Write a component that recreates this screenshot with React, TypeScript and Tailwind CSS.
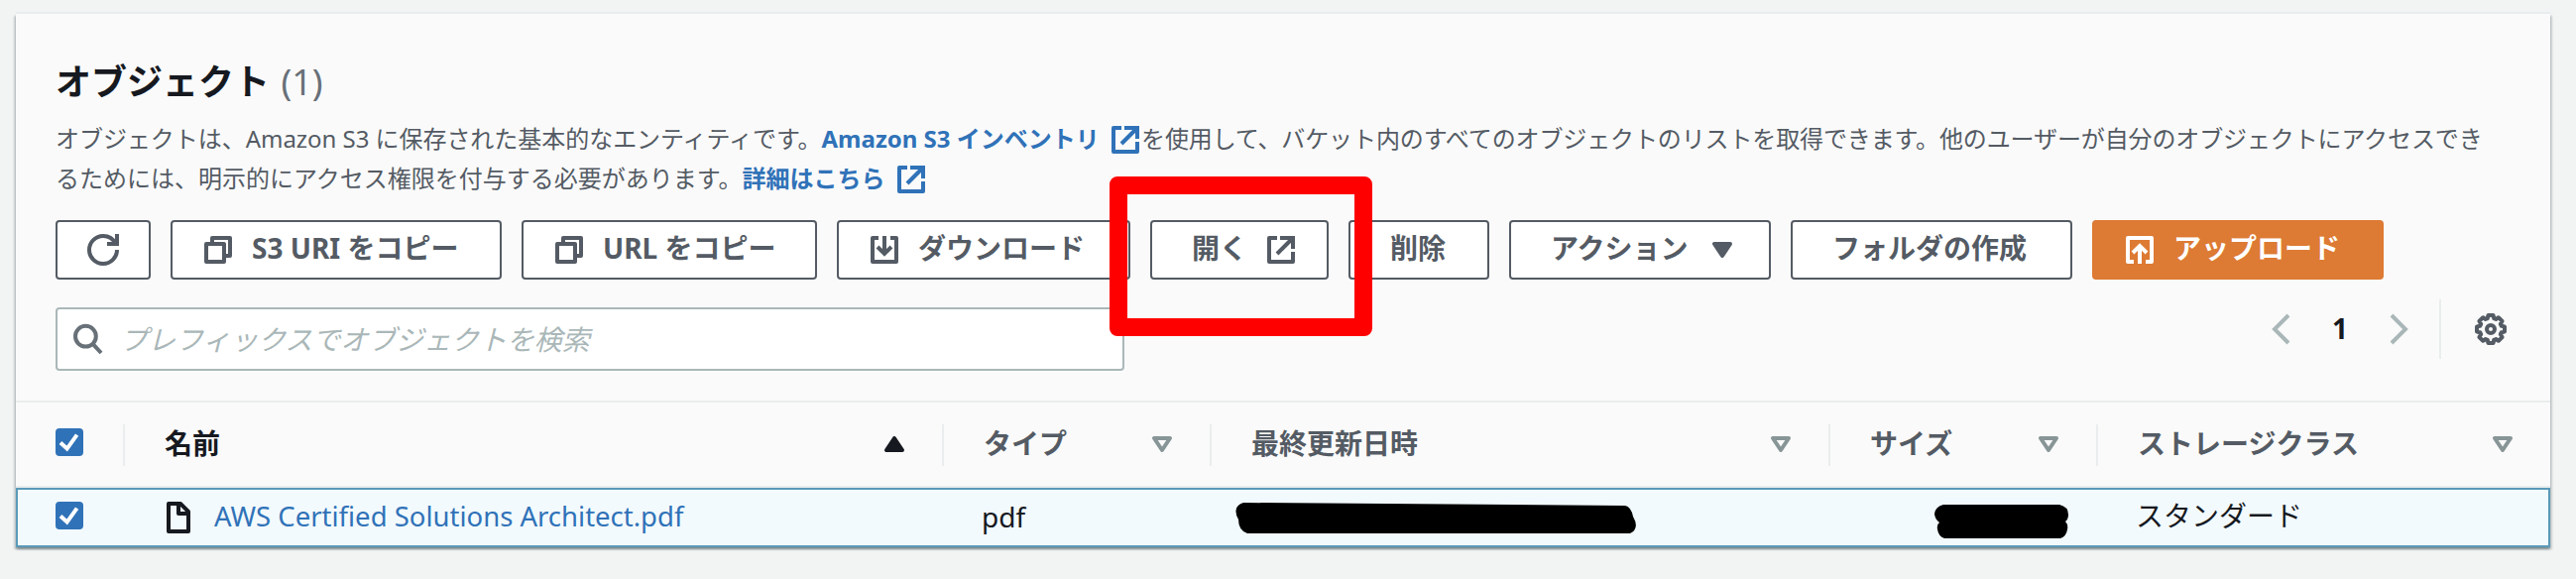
import type { ReactNode } from "react"

const strokeIcon = "shrink-0 w-8 h-8 fill-none stroke-current stroke-2"

function RefreshIcon() {
  return (
    <svg viewBox="0 0 16 16" className={strokeIcon}>
      <path d="M15 8c0 3.87-3.13 7-7 7s-7-3.13-7-7 3.13-7 7-7c2.79 0 5.2 1.63 6.33 4" />
      <path d="M10 5h5V0" />
    </svg>
  )
}

function CopyIcon() {
  return (
    <svg viewBox="0 0 16 16" className={strokeIcon} strokeLinejoin="round">
      <path d="M2 5h9v9H2z" />
      <path d="M5 5V2h9v9h-3" />
    </svg>
  )
}

function DownloadIcon() {
  return (
    <svg viewBox="0 0 16 16" className={strokeIcon} strokeLinejoin="round">
      <path d="M5 2H2v12h12V2h-3" />
      <path d="M8 1v9" />
      <path d="M4.5 6.5 8 10l3.5-3.5" strokeLinejoin="miter" />
    </svg>
  )
}

function UploadIcon() {
  return (
    <svg viewBox="0 0 16 16" className={strokeIcon} strokeLinejoin="round">
      <path d="M5 14H2V2h12v12h-3" />
      <path d="M8 15V6" />
      <path d="M4.5 9.5 8 6l3.5 3.5" strokeLinejoin="miter" />
    </svg>
  )
}

function ExternalIcon({ className = "" }: { className?: string }) {
  return (
    <svg viewBox="0 0 16 16" className={`${strokeIcon} ${className}`} strokeLinejoin="round">
      <path d="M14 9v5H2V2h4" />
      <path d="M7.5 2H14v5.5" strokeLinejoin="miter" />
      <path d="m6 10 8-8" />
    </svg>
  )
}

function SettingsIcon() {
  return (
    <svg viewBox="0 0 16 16" className="w-8 h-8 fill-none stroke-[#545b64] stroke-2" strokeLinejoin="round">
      <path d="M6.7 1h2.6l.3 1.6 1 .4 1.3-.9 1.9 1.9-.9 1.4.5 1 1.6.3v2.6l-1.6.3-.5 1 .9 1.4-1.9 1.9-1.3-.9-1 .4-.3 1.6H6.7l-.3-1.6-1-.4-1.3.9L2.2 12l.9-1.4-.5-1L1 9.3V6.7l1.6-.3.5-1L2.2 4l1.9-1.9 1.3.9 1-.4z" />
      <circle cx="8" cy="8" r="2" />
    </svg>
  )
}

function SortIcon({ sorted = false }: { sorted?: boolean }) {
  if (sorted) {
    return (
      <svg viewBox="0 0 16 16" className="w-8 h-8 fill-[#16191f] stroke-[#16191f] stroke-2" strokeLinejoin="round">
        <path d="M4 11h8L8 5z" />
      </svg>
    )
  }
  return (
    <svg viewBox="0 0 16 16" className="w-8 h-8 fill-none stroke-[#879596] stroke-2" strokeLinejoin="round">
      <path d="M4 5h8l-4 6z" />
    </svg>
  )
}

function Checkbox() {
  return (
    <div className="mb-1 h-7 w-7 rounded bg-[#3072b8]">
      <svg viewBox="0 0 14 14" className="w-7 h-7 fill-none stroke-white stroke-2">
        <path d="m2.5 7.3 3.3 3 5-7" />
      </svg>
    </div>
  )
}

function Button({ className, primary, children }: { className: string; primary?: boolean; children: ReactNode }) {
  const colors = primary
    ? "border-[#dd7a33] bg-[#dd7a33] text-white"
    : "border-[#545b64] bg-white text-[#545b64]"
  return (
    <button
      className={`flex shrink-0 h-[60px] items-center rounded border-2 text-[28px] leading-[56px] font-bold whitespace-nowrap ${colors} ${className}`}
    >
      {children}
    </button>
  )
}

function Label({ children }: { children: ReactNode }) {
  return <span className="pb-[3px] leading-[53px]">{children}</span>
}

function HeaderCell({ className, label, sorted }: { className: string; label: string; sorted?: boolean }) {
  return (
    <div className={`mt-0.5 flex shrink-0 h-[42px] items-center justify-between border-l-2 border-[#eaeded] pb-0.5 pl-10 pr-8 ${className}`}>
      <span className={sorted ? "pb-0.5 text-[#16191f]" : "pb-0.5 text-[#545b64]"}>{label}</span>
      <SortIcon sorted={sorted} />
    </div>
  )
}

export default function App() {
  return (
    <div className="relative w-[2598px] h-[584px] overflow-hidden bg-[#f2f4f4] px-4 pt-3.5 font-['Noto_Sans','Noto_Sans_CJK_JP',sans-serif] text-[#16191f]">
      <div className="w-[2556px] h-[538px] bg-[#fafafa] shadow-[0_-2px_0_#eaeded,0_2px_2px_rgba(0,28,36,0.3),2px_2px_2px_rgba(0,28,36,0.15),-2px_2px_2px_rgba(0,28,36,0.15)]">
        {/* Panel header */}
        <div className="h-[392px] border-b-2 border-[#eaeded] px-10 pt-[45px]">
          <h2 className="h-12 text-4xl leading-[48px] font-bold">
            オブジェクト <span className="ml-0.5 font-normal text-[#687078]">(1)</span>
          </h2>
          <div className="mt-[13px] h-20 text-2xl leading-10 whitespace-nowrap text-[#545b64]">
            <p className="h-10">
              <span className="tracking-[-0.04px]">オブジェクトは、Amazon S3 に保存された基本的なエンティティです。</span>
              <a className="font-bold text-[#3072b8]">
                Amazon S3 インベントリ <ExternalIcon className="ml-1 inline-block align-[-8px]" />
              </a>
              <span className="tracking-[-0.12px]">
                を使用して、バケット内のすべてのオブジェクトのリストを取得できます。他のユーザーが自分のオブジェクトにアクセスでき
              </span>
            </p>
            <p className="h-10">
              るためには、明示的にアクセス権限を付与する必要があります。
              <a className="font-bold text-[#3072b8]">
                詳細はこちら <ExternalIcon className="ml-1 inline-block align-[-8px]" />
              </a>
            </p>
          </div>

          {/* Actions */}
          <div className="mt-[22px] flex gap-5">
            <Button className="w-24 justify-center"><RefreshIcon /></Button>
            <Button className="w-[334px] gap-[18px] pl-[30px]"><CopyIcon /><Label>S3 URI をコピー</Label></Button>
            <Button className="w-[298px] gap-[18px] pl-[30px]"><CopyIcon /><Label>URL をコピー</Label></Button>
            <Button className="w-[296px] gap-[18px] pl-[30px]"><DownloadIcon /><Label>ダウンロード</Label></Button>
            <Button className="w-[180px] gap-[18px] pl-10"><Label>開く</Label><ExternalIcon /></Button>
            <Button className="w-[142px] pl-10"><Label>削除</Label></Button>
            <Button className="w-[264px] gap-[18px] pl-10">
              <Label>アクション</Label>
              <svg viewBox="0 0 16 16" className="w-8 h-8 fill-current stroke-current stroke-2" strokeLinejoin="round">
                <path d="M4 5h8l-4 6z" />
              </svg>
            </Button>
            <Button className="w-[284px] pl-10"><Label>フォルダの作成</Label></Button>
            <Button className="w-[294px] gap-[18px] pl-[30px]" primary><UploadIcon /><Label>アップロード</Label></Button>
          </div>

          {/* Search and pagination */}
          <div className="mt-7 flex justify-between">
            <div className="flex h-16 w-[1078px] items-center rounded border-2 border-[#aab7b8] bg-white pl-4">
              <svg viewBox="0 0 16 16" className="w-8 h-8 fill-none stroke-[#687078] stroke-2">
                <circle cx="6.2" cy="6.6" r="5.2" />
                <path d="m9.8 10.4 4.2 4.6" />
              </svg>
              <span className="ml-[15px] text-[28px] tracking-[-0.05px] text-[#aab7b8] italic">プレフィックスでオブジェクトを検索</span>
            </div>
            <div className="-mt-2 mr-1 flex h-[60px] items-center">
              <svg viewBox="0 0 16 16" className="w-8 h-8 fill-none stroke-[#aab7b8] stroke-2">
                <path d="M12 1 5 8l7 7" />
              </svg>
              <span className="w-[88px] pb-0.5 text-center text-[28px] font-bold">1</span>
              <svg viewBox="0 0 16 16" className="w-8 h-8 fill-none stroke-[#aab7b8] stroke-2">
                <path d="m4 1 7 7-7 7" />
              </svg>
              <div className="mr-[34px] ml-6 h-[60px] w-0.5 bg-[#eaeded]" />
              <SettingsIcon />
            </div>
          </div>
        </div>

        {/* Column headings */}
        <div className="flex h-[86px] items-center border-b-2 border-[#eaeded] text-[28px] font-bold">
          <div className="w-[108px] shrink-0 pl-10"><Checkbox /></div>
          <HeaderCell className="w-[826px]" label="名前" sorted />
          <HeaderCell className="w-[270px]" label="タイプ" />
          <HeaderCell className="w-[624px]" label="最終更新日時" />
          <HeaderCell className="w-[270px]" label="サイズ" />
          <HeaderCell className="w-[458px]" label="ストレージクラス" />
        </div>

        {/* Selected object */}
        <div className="flex h-[60px] items-center border-2 border-[#5a9ab8] bg-[#f2fafd] text-[28px]">
          <div className="w-[146px] shrink-0 pl-[38px]"><Checkbox /></div>
          <div className="flex w-[826px] shrink-0 items-center">
            <svg viewBox="0 0 16 16" className="w-8 h-8 fill-none stroke-[#16191f] stroke-2" strokeLinejoin="round">
              <path d="M3 1h6l4 4v10H3z" />
              <path d="M8 1v5h5" />
            </svg>
            <a className="ml-5 pb-0.5 text-[27.5px] text-[#3072b8]">AWS Certified Solutions Architect.pdf</a>
          </div>
          <div className="w-64 shrink-0 pb-0.5">pdf</div>
          <div className="w-[705px] shrink-0">
            <svg viewBox="0 0 405 31" className="h-[31px] w-[405px]">
              <path d="M8 0 393 3q6 1 8 11 7 12-3 17H12Q3 28 3 17-4 4 8 0z" />
            </svg>
          </div>
          <div className="w-[203px] shrink-0 pt-2">
            <svg viewBox="0 0 135 34" className="h-[34px] w-[135px]">
              <path d="M9 0H126q9 2 9 10 0 5-3 7 3 3 2 8-1 7-7 9H10Q4 32 3 25 2 20 5 18 0 14 0 9 1 2 9 0z" />
            </svg>
          </div>
          <div className="pb-1">スタンダード</div>
        </div>
      </div>

      {/* Highlight around the open button */}
      <div className="absolute top-[178px] left-[1119px] h-[161px] w-[265px] rounded-lg border-[18px] border-[#ff0000]" />
    </div>
  )
}
